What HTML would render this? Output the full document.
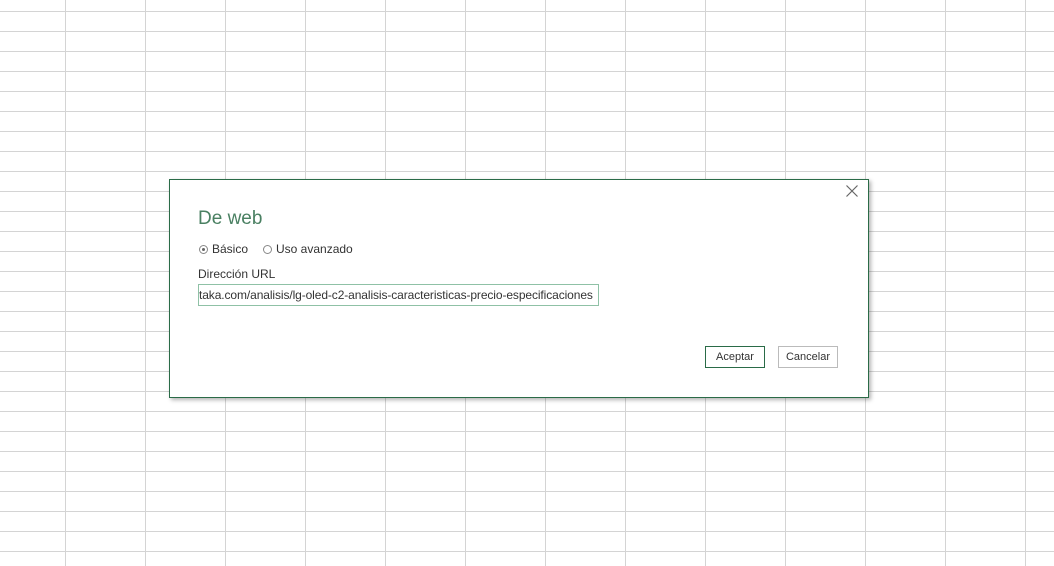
<!DOCTYPE html>
<html><head><style>
body{margin:0;width:1054px;height:566px;overflow:hidden;background:#fff;font-family:"Liberation Sans",sans-serif;position:relative;
background-image:linear-gradient(to right,#d4d4d4 1px,transparent 1px),linear-gradient(to bottom,#d4d4d4 1px,transparent 1px);
background-size:80px 20px;background-position:65px 11px;}
.dlg{position:absolute;left:169px;top:179px;width:698px;height:217px;background:#fff;border:1px solid #2a6b47;box-shadow:2px 2px 4px rgba(0,0,0,.3);}
.t{position:absolute;left:28px;top:28px;font-size:19px;color:#4a8062;}
.r{position:absolute;top:62px;font-size:12px;color:#333;}
.rb{display:inline-block;width:9px;height:9px;border:1px solid #888;border-radius:50%;vertical-align:-1px;margin-right:4px;position:relative;box-sizing:border-box}
.rb.on::after{content:"";position:absolute;left:2px;top:2px;width:3px;height:3px;border-radius:50%;background:#666}
.lbl{position:absolute;left:28px;top:87px;font-size:12px;color:#333}
.inp{position:absolute;left:28px;top:104px;width:399px;height:20px;border:1px solid #8fc1a6;font-size:12px;color:#333;line-height:20px;padding-left:0;white-space:nowrap;overflow:hidden;letter-spacing:-0.1px}
.btn{position:absolute;top:166px;height:20px;font-size:11px;line-height:20px;text-align:center;color:#333;box-sizing:border-box}
.x{position:absolute;left:676px;top:5px}
</style></head><body>
<div class="dlg">
<svg class="x" width="12" height="12" viewBox="0 0 12 12"><path d="M0.5 0.5L11.5 11.5M11.5 0.5L0.5 11.5" stroke="#666" stroke-width="1.2"/></svg>
<div class="t">De web</div>
<div class="r" style="left:29px"><span class="rb on"></span>Básico</div>
<div class="r" style="left:93px"><span class="rb"></span>Uso avanzado</div>
<div class="lbl">Dirección URL</div>
<div class="inp">taka.com/analisis/lg-oled-c2-analisis-caracteristicas-precio-especificaciones</div>
<div class="btn" style="left:535px;width:60px;height:22px;border:1px solid #2a6b47">Aceptar</div>
<div class="btn" style="left:608px;width:60px;height:22px;border:1px solid #bbb">Cancelar</div>
</div>
</body></html>
